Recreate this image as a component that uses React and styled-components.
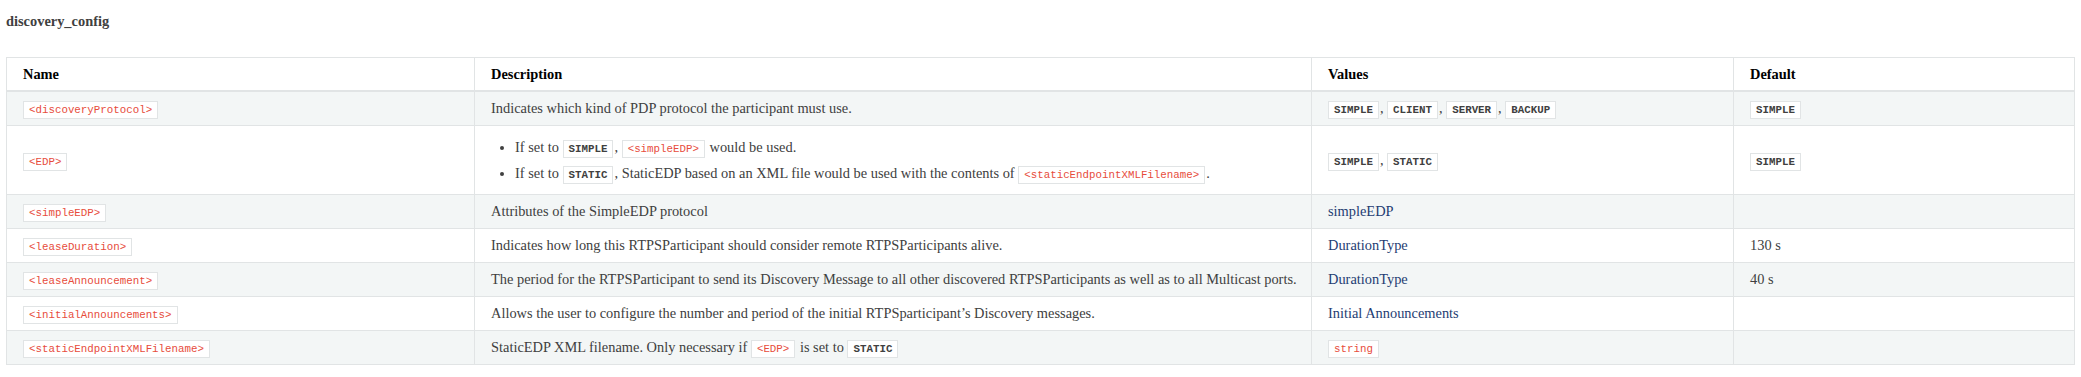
import React from "react";
import styled, { createGlobalStyle } from "styled-components";

const Global = createGlobalStyle`
  html, body { margin: 0; padding: 0; background: #fff; }
  body { font-family: "Liberation Serif", "Times New Roman", serif; color: #404040; }
`;

const Page = styled.div`
  padding: 9px 7px 0 6px;
`;

const Title = styled.div`
  font-size: 14.4px;
  line-height: 24px;
  font-weight: bold;
  color: #404040;
  margin-bottom: 24px;
`;

const Table = styled.table`
  width: 2068px;
  table-layout: fixed;
  border-collapse: collapse;
  border-spacing: 0;
  border: 1px solid #e1e4e5;
  font-size: 14.4px;
`;

const Th = styled.th`
  text-align: left;
  font-weight: bold;
  color: #000;
  padding: 8px 16px;
  line-height: 16px;
  border-left: 1px solid #e1e4e5;
  border-bottom: 2px solid #e1e4e5;
  vertical-align: bottom;
`;

const Tr = styled.tr`
  background: ${(p) => (p.$odd ? "#f3f6f6" : "#fff")};
`;

const Td = styled.td`
  padding: 8px 16px;
  line-height: 17px;
  border-left: 1px solid #e1e4e5;
  border-bottom: 1px solid #e1e4e5;
  vertical-align: middle;
  color: #404040;
  white-space: nowrap;
`;

const Code = styled.code`
  font-family: "Liberation Mono", "Courier New", monospace;
  font-size: 10.8px;
  line-height: 12px;
  padding: 2px 5px;
  margin-right: 1px;
  border: 1px solid #e1e4e5;
  background: #fff;
  color: ${(p) => (p.$xref ? "#404040" : "#e74c3c")};
  font-weight: ${(p) => (p.$xref ? "bold" : "normal")};
  white-space: nowrap;
`;

const Link = styled.span`
  color: #1f3d73;
`;

const List = styled.ul`
  margin: 0;
  padding-left: 24px;
  list-style: disc;
`;

const Item = styled.li`
  line-height: 26px;
`;

const K = ({ children }) => <Code $xref>{children}</Code>;
const R = ({ children }) => <Code>{children}</Code>;

export default function App() {
  return (
    <Page>
      <Global />
      <Title>discovery_config</Title>
      <Table>
        <colgroup>
          <col style={{ width: 468 }} />
          <col style={{ width: 837 }} />
          <col style={{ width: 422 }} />
          <col style={{ width: 341 }} />
        </colgroup>
        <thead>
          <tr>
            <Th>Name</Th>
            <Th>Description</Th>
            <Th>Values</Th>
            <Th>Default</Th>
          </tr>
        </thead>
        <tbody>
          <Tr $odd>
            <Td><R>&lt;discoveryProtocol&gt;</R></Td>
            <Td>Indicates which kind of PDP protocol the participant must use.</Td>
            <Td>
              <K>SIMPLE</K>, <K>CLIENT</K>, <K>SERVER</K>, <K>BACKUP</K>
            </Td>
            <Td><K>SIMPLE</K></Td>
          </Tr>
          <Tr>
            <Td><R>&lt;EDP&gt;</R></Td>
            <Td>
              <List>
                <Item>
                  If set to <K>SIMPLE</K>, <R>&lt;simpleEDP&gt;</R> would be used.
                </Item>
                <Item>
                  If set to <K>STATIC</K>, StaticEDP based on an XML file would be used with the contents of{" "}
                  <R>&lt;staticEndpointXMLFilename&gt;</R>.
                </Item>
              </List>
            </Td>
            <Td>
              <K>SIMPLE</K>, <K>STATIC</K>
            </Td>
            <Td><K>SIMPLE</K></Td>
          </Tr>
          <Tr $odd>
            <Td><R>&lt;simpleEDP&gt;</R></Td>
            <Td>Attributes of the SimpleEDP protocol</Td>
            <Td><Link>simpleEDP</Link></Td>
            <Td></Td>
          </Tr>
          <Tr>
            <Td><R>&lt;leaseDuration&gt;</R></Td>
            <Td>Indicates how long this RTPSParticipant should consider remote RTPSParticipants alive.</Td>
            <Td><Link>DurationType</Link></Td>
            <Td>130 s</Td>
          </Tr>
          <Tr $odd>
            <Td><R>&lt;leaseAnnouncement&gt;</R></Td>
            <Td>
              The period for the RTPSParticipant to send its Discovery Message to all other discovered RTPSParticipants as well as to all Multicast ports.
            </Td>
            <Td><Link>DurationType</Link></Td>
            <Td>40 s</Td>
          </Tr>
          <Tr>
            <Td><R>&lt;initialAnnouncements&gt;</R></Td>
            <Td>Allows the user to configure the number and period of the initial RTPSparticipant’s Discovery messages.</Td>
            <Td><Link>Initial Announcements</Link></Td>
            <Td></Td>
          </Tr>
          <Tr $odd>
            <Td><R>&lt;staticEndpointXMLFilename&gt;</R></Td>
            <Td>
              StaticEDP XML filename. Only necessary if <R>&lt;EDP&gt;</R> is set to <K>STATIC</K>
            </Td>
            <Td><R>string</R></Td>
            <Td></Td>
          </Tr>
        </tbody>
      </Table>
    </Page>
  );
}
